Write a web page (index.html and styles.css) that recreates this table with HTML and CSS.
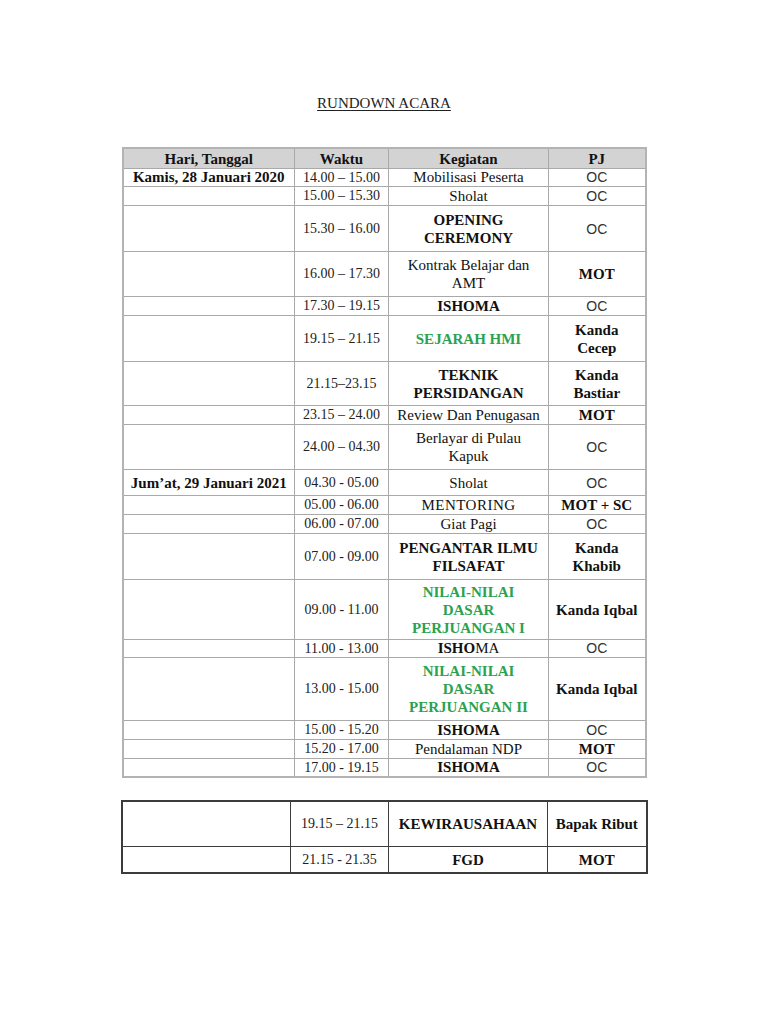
FILE: index.html
```html
<!DOCTYPE html>
<html>
<head>
<meta charset="utf-8">
<link rel="stylesheet" href="styles.css">
</head>
<body>
<div class="page">
  <h1 class="title">RUNDOWN ACARA</h1>
  <table class="rundown main">
    <colgroup><col class="c1"><col class="c2"><col class="c3"><col class="c4"></colgroup>
    <tr class="head r20"><th>Hari, Tanggal</th><th>Waktu</th><th>Kegiatan</th><th>PJ</th></tr>
    <tr class="r18"><td class="b">Kamis, 28 Januari 2020</td><td>14.00 – 15.00</td><td>Mobilisasi Peserta</td><td class="sans">OC</td></tr>
    <tr class="r19"><td></td><td>15.00 – 15.30</td><td>Sholat</td><td class="sans">OC</td></tr>
    <tr class="r46"><td></td><td>15.30 – 16.00</td><td class="b">OPENING<br>CEREMONY</td><td class="sans">OC</td></tr>
    <tr class="r45"><td></td><td>16.00 – 17.30</td><td>Kontrak Belajar dan<br>AMT</td><td class="b">MOT</td></tr>
    <tr class="r19"><td></td><td>17.30 – 19.15</td><td class="b">ISHOMA</td><td class="sans">OC</td></tr>
    <tr class="r46"><td></td><td>19.15 – 21.15</td><td class="b green">SEJARAH HMI</td><td class="b">Kanda<br>Cecep</td></tr>
    <tr class="r44"><td></td><td>21.15–23.15</td><td class="b">TEKNIK<br>PERSIDANGAN</td><td class="b">Kanda<br>Bastiar</td></tr>
    <tr class="r19"><td></td><td>23.15 – 24.00</td><td>Review Dan Penugasan</td><td class="b">MOT</td></tr>
    <tr class="r45"><td></td><td>24.00 – 04.30</td><td>Berlayar di Pulau<br>Kapuk</td><td class="sans">OC</td></tr>
    <tr class="r26"><td class="b">Jum’at, 29 Januari 2021</td><td>04.30 - 05.00</td><td>Sholat</td><td class="sans">OC</td></tr>
    <tr class="r19"><td></td><td>05.00 - 06.00</td><td class="spaced">MENTORING</td><td class="b">MOT + SC</td></tr>
    <tr class="r19"><td></td><td>06.00 - 07.00</td><td>Giat Pagi</td><td class="sans">OC</td></tr>
    <tr class="r46"><td></td><td>07.00 - 09.00</td><td class="b">PENGANTAR ILMU<br>FILSAFAT</td><td class="b">Kanda<br>Khabib</td></tr>
    <tr class="r60"><td></td><td>09.00 - 11.00</td><td class="b green">NILAI-NILAI<br>DASAR<br>PERJUANGAN I</td><td class="b">Kanda Iqbal</td></tr>
    <tr class="r18"><td></td><td>11.00 - 13.00</td><td><span class="bold">ISHO</span>MA</td><td class="sans">OC</td></tr>
    <tr class="r63"><td></td><td>13.00 - 15.00</td><td class="b green">NILAI-NILAI<br>DASAR<br>PERJUANGAN II</td><td class="b">Kanda Iqbal</td></tr>
    <tr class="r19"><td></td><td>15.00 - 15.20</td><td class="b">ISHOMA</td><td class="sans">OC</td></tr>
    <tr class="r19"><td></td><td>15.20 - 17.00</td><td>Pendalaman NDP</td><td class="b">MOT</td></tr>
    <tr class="r18"><td></td><td>17.00 - 19.15</td><td class="b">ISHOMA</td><td class="sans">OC</td></tr>
  </table>

  <table class="rundown extra">
    <colgroup><col class="d1"><col class="d2"><col class="d3"><col class="d4"></colgroup>
    <tr class="r45"><td></td><td>19.15 – 21.15</td><td class="b">KEWIRAUSAHAAN</td><td class="b">Bapak Ribut</td></tr>
    <tr class="r26"><td></td><td>21.15 - 21.35</td><td class="b">FGD</td><td class="b">MOT</td></tr>
  </table>
</div>
</body>
</html>
```

FILE: styles.css
```css
html, body {
  margin: 0;
  padding: 0;
  background: #ffffff;
}

.page {
  width: 768px;
  padding-top: 94px;
  font-family: "Liberation Serif", "Times New Roman", serif;
  color: #111111;
}

.title {
  margin: 0 0 35px 0;
  font-size: 15px;
  line-height: 18px;
  font-weight: normal;
  text-align: center;
  text-decoration: underline;
  text-underline-offset: 2px;
  text-decoration-thickness: 1px;
  color: #222222;
}

.rundown {
  border-collapse: collapse;
  margin: 0 auto;
  table-layout: fixed;
}

.rundown td,
.rundown th {
  padding: 0 2px;
  font-size: 15px;
  line-height: 18px;
  text-align: center;
  vertical-align: middle;
  font-weight: normal;
  white-space: nowrap;
}

.rundown td:nth-child(2) {
  font-size: 14px;
  color: #222222;
}

.main {
  width: 523px;
  border: 2px solid #b3b3b3;
}

.main td,
.main th {
  border: 1px solid #a9a9a9;
}

.main .c1 { width: 172px; }
.main .c2 { width: 94px; }
.main .c3 { width: 160px; }
.main .c4 { width: 97px; }

.rundown .head th {
  background: #d3d3d3;
  font-weight: bold;
}

.extra {
  width: 525px;
  margin-top: 22px;
  border: 2px solid #3c3c3c;
}

.extra td {
  border: 1px solid #3c3c3c;
}

.extra .d1 { width: 169px; }
.extra .d2 { width: 98px; }
.extra .d3 { width: 159px; }
.extra .d4 { width: 99px; }

.rundown .r18 td { height: 17px; line-height: 17px; }
.r19 td { height: 18px; }
.r20 th { height: 19px; }
.r26 td { height: 25px; }
.r44 td { height: 43px; }
.r45 td { height: 44px; }
.r46 td { height: 45px; }
.r60 td { height: 59px; }
.r63 td { height: 62px; }

.rundown .b,
.rundown .bold {
  font-weight: bold;
}

.rundown .green {
  color: #2aa24f;
}

.rundown .sans {
  font-family: "Liberation Sans", Arial, sans-serif;
  font-size: 14px;
  color: #333333;
}

.rundown .spaced {
  letter-spacing: 0.5px;
}
```
